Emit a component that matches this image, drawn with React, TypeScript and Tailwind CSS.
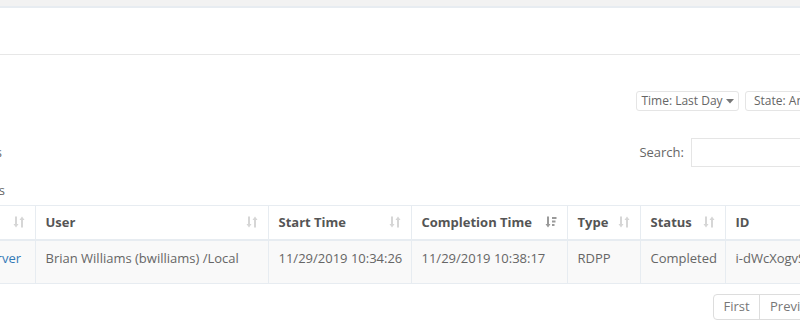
import React from "react";

const SortIcon = ({ active = false }: { active?: boolean }) =>
  active ? (
    <svg width="12" height="12" viewBox="0 0 12 12" className="shrink-0">
      <g fill="#9a9a9a">
        <rect x="2" y="0.5" width="2" height="8" />
        <polygon points="0.5,8 5.5,8 3,11.5" />
        <rect x="7" y="1" width="4.5" height="2" />
        <rect x="7" y="4.5" width="3.5" height="2" />
        <rect x="7" y="8" width="2.5" height="2" />
      </g>
    </svg>
  ) : (
    <svg width="12" height="12" viewBox="0 0 12 12" className="shrink-0">
      <g fill="#d6d6d6">
        <rect x="2" y="0.5" width="2" height="8" />
        <polygon points="0.5,8 5.5,8 3,11.5" />
        <rect x="8" y="3.5" width="2" height="8" />
        <polygon points="6.5,4 11.5,4 9,0.5" />
      </g>
    </svg>
  );

const Th = ({ children, active, last }: { children?: React.ReactNode; active?: boolean; last?: boolean }) => (
  <th
    className={`h-[34px] px-[10px] text-left align-middle font-bold text-[#555] border-t border-b-2 border-[#e7ecf1] ${
      last ? "" : "border-r"
    }`}
  >
    <div className="flex items-center justify-between">
      <span className="whitespace-nowrap">{children}</span>
      {!last && <SortIcon active={active} />}
    </div>
  </th>
);

const Td = ({ children, last }: { children?: React.ReactNode; last?: boolean }) => (
  <td
    className={`h-[44px] px-[10px] pt-[8px] align-top whitespace-nowrap overflow-hidden text-[#666] border-b border-[#e7ecf1] ${
      last ? "" : "border-r"
    }`}
  >
    {children}
  </td>
);

export default function App() {
  return (
    <div className="w-[800px] h-[335px] overflow-hidden bg-white text-[13px] font-['Open_Sans',sans-serif] text-[#666]">
      <div className="h-[6px] bg-[#f2f2f2]" />
      <div className="h-[2px] bg-[#e7ecf1]" />
      <div className="h-[47px] border-b border-[#e7e7e7]" />

      <div className="-ml-[150px] w-[983px]">
        {/* toolbar */}
        <div className="mt-[36px] flex justify-end gap-[6px] text-[12px]">
          <button className="w-[103px] h-[20px] flex items-center justify-center gap-[3px] border border-[#e5e5e5] rounded-[3px] text-[#666] leading-none">
            Time: Last Day
            <svg width="8" height="5" viewBox="0 0 8 5">
              <polygon points="0,0 8,0 4,4.5" fill="#777" />
            </svg>
          </button>
          <button className="w-[88px] h-[20px] flex items-center justify-start pl-[8px] gap-[3px] border border-[#e5e5e5] rounded-[3px] text-[#666] leading-none">
            State: Any
            <svg width="8" height="5" viewBox="0 0 8 5">
              <polygon points="0,0 8,0 4,4.5" fill="#777" />
            </svg>
          </button>
        </div>

        {/* length + search */}
        <div className="mt-[27px] flex items-center justify-between h-[29px]">
          <div className="w-[152px] text-right whitespace-nowrap">Show 10 entries</div>
          <div className="flex items-center gap-[7px]">
            <span className="text-[#666]">Search:</span>
            <input className="w-[142px] h-[29px] border border-[#e5e5e5] outline-none" />
          </div>
        </div>

        {/* info */}
        <div className="mt-[14px] h-[18px] leading-[18px] w-[155px] text-right whitespace-nowrap">
          Recorded Sessions
        </div>

        {/* table */}
        <table className="mt-[6px] w-[983px] table-fixed border-collapse">
          <colgroup>
            <col className="w-[185px]" />
            <col className="w-[233px]" />
            <col className="w-[143px]" />
            <col className="w-[156px]" />
            <col className="w-[73px]" />
            <col className="w-[85px]" />
            <col className="w-[108px]" />
          </colgroup>
          <thead>
            <tr>
              <Th>Resource</Th>
              <Th>User</Th>
              <Th>Start Time</Th>
              <Th active>Completion Time</Th>
              <Th>Type</Th>
              <Th>Status</Th>
              <Th last>ID</Th>
            </tr>
          </thead>
          <tbody>
            <tr className="bg-[#f9f9f9]">
              <Td>
                <div className="w-[161px] text-right">
                  <a className="text-[#337ab7]">Prod Windows Server</a>
                </div>
              </Td>
              <Td>Brian Williams (bwilliams) /Local</Td>
              <Td>11/29/2019 10:34:26</Td>
              <Td>11/29/2019 10:38:17</Td>
              <Td>RDPP</Td>
              <Td>Completed</Td>
              <Td last>i-dWcXogvS7k</Td>
            </tr>
          </tbody>
        </table>

        {/* pagination */}
        <div className="mt-[10px] flex justify-end">
          <div className="flex h-[26px] border border-[#ddd] rounded-l-[4px]">
            <span className="w-[46px] flex items-center justify-center text-[#777] border-r border-[#ddd]">First</span>
            <span className="w-[72px] flex items-center justify-start pl-[10px] text-[#777]">Previous</span>
          </div>
        </div>
      </div>
    </div>
  );
}
